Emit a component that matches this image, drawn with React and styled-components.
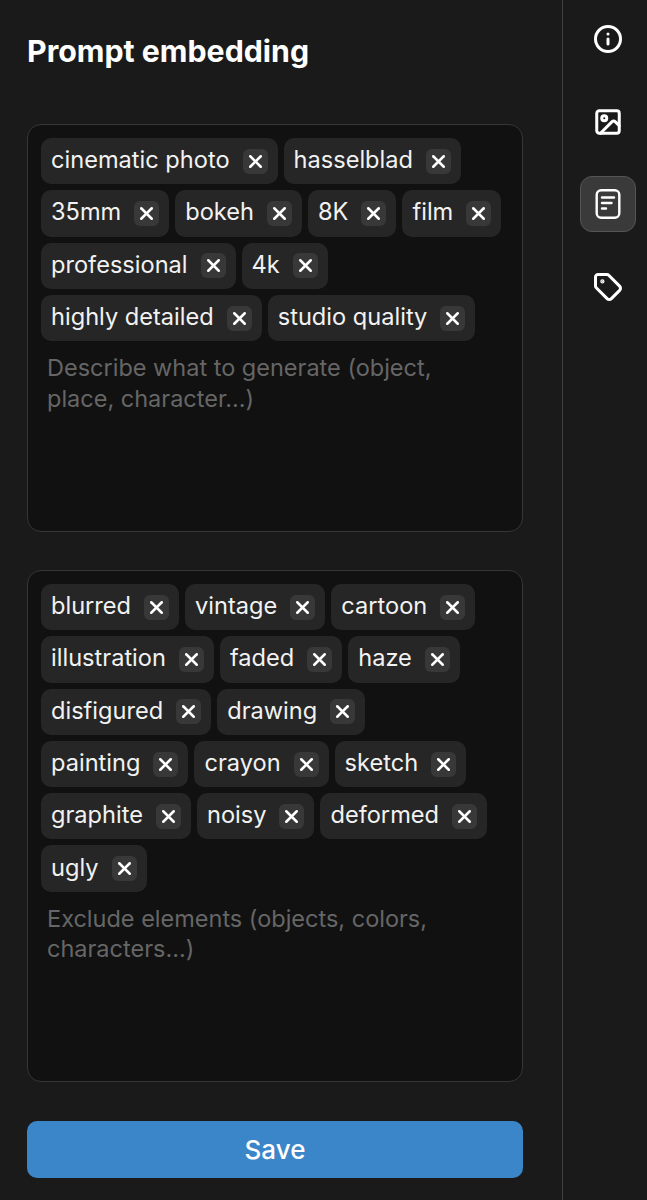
import styled, { createGlobalStyle } from "styled-components";
import { Info, Image, Tag, X } from "lucide-react";

const GlobalStyle = createGlobalStyle`
  html, body {
    margin: 0;
    background: #1a1a1a;
  }
  * {
    box-sizing: border-box;
  }
`;

const FONT = `Inter, "Noto Sans", "Liberation Sans", sans-serif`;

const Page = styled.div`
  display: flex;
  width: 647px;
  height: 1200px;
  background: #1a1a1a;
  font-family: ${FONT};
  overflow: hidden;
`;

const Main = styled.main`
  width: 563px;
  border-right: 1px solid #414141;
  padding: 30px 39px 22px 27px;
  display: flex;
  flex-direction: column;
`;

const Title = styled.h1`
  margin: 0 0 52px;
  height: 42px;
  line-height: 42px;
  font-size: 30.3px;
  font-weight: 650;
  color: #fff;
`;

const PromptBox = styled.div`
  height: ${(p) => p.$height}px;
  flex-shrink: 0;
  padding: 13px;
  background: #111111;
  border: 1px solid #363636;
  border-radius: 14px;
  display: flex;
  flex-direction: column;
  gap: 6px;
  margin-bottom: ${(p) => p.$gap}px;
`;

const TagList = styled.div`
  display: flex;
  flex-wrap: wrap;
  gap: 6px;
`;

const Chip = styled.div`
  height: 46.3px;
  display: flex;
  align-items: center;
  gap: 13px;
  padding: 0 10px;
  background: #262626;
  border-radius: 10px;
  color: #f2f2f2;
  font-size: 23.6px;
  white-space: nowrap;
`;

const ChipLabel = styled.span`
  margin-bottom: 3px;
`;

const ChipClose = styled.span`
  width: 25px;
  height: 25px;
  display: flex;
  align-items: center;
  justify-content: center;
  background: #383838;
  border-radius: 6px;
  color: #fff;
`;

const PromptInput = styled.textarea`
  flex: 1;
  background: transparent;
  border: none;
  outline: none;
  resize: none;
  padding: 6px 6px;
  font-family: ${FONT};
  font-size: 23.5px;
  line-height: 30.5px;
  color: #fff;

  &::placeholder {
    color: #666666;
    opacity: 1;
  }
`;

const SaveButton = styled.button`
  height: 57px;
  flex-shrink: 0;
  background: #3b85c9;
  border: none;
  border-radius: 10px;
  color: #fff;
  font-family: ${FONT};
  font-size: 26px;
  font-weight: 500;
`;

const Sidebar = styled.nav`
  flex: 1;
  display: flex;
  flex-direction: column;
  align-items: center;
  gap: 26.7px;
  padding: 11px 0 0 6px;
`;

const SideButton = styled.div`
  width: 56px;
  height: 56px;
  display: flex;
  align-items: center;
  justify-content: center;
  color: #fff;
  border-radius: 12px;
  border: 1px solid ${(p) => (p.$active ? "#555555" : "transparent")};
  background: ${(p) => (p.$active ? "#3a3a3a" : "transparent")};
`;

function DocIcon() {
  return (
    <svg width="30" height="30" viewBox="0 0 30 30" fill="none" stroke="currentColor" strokeWidth="2.4" strokeLinecap="round">
      <rect x="3.7" y="1.2" width="22.6" height="27.6" rx="4.5" />
      <path d="M9 8.5h12M9 14h9.5M9 19.5h4" />
    </svg>
  );
}

const positive = [
  "cinematic photo", "hasselblad", "35mm", "bokeh", "8K", "film",
  "professional", "4k", "highly detailed", "studio quality",
];
const negative = [
  "blurred", "vintage", "cartoon", "illustration", "faded", "haze",
  "disfigured", "drawing", "painting", "crayon", "sketch", "graphite",
  "noisy", "deformed", "ugly",
];

function TagBox({ tags, placeholder, height, gap }) {
  return (
    <PromptBox $height={height} $gap={gap}>
      <TagList>
        {tags.map((t) => (
          <Chip key={t}>
            <ChipLabel>{t}</ChipLabel>
            <ChipClose>
              <X size={21} strokeWidth={2.9} />
            </ChipClose>
          </Chip>
        ))}
      </TagList>
      <PromptInput placeholder={placeholder} />
    </PromptBox>
  );
}

export default function App() {
  return (
    <Page>
      <GlobalStyle />
      <Main>
        <Title>Prompt embedding</Title>
        <TagBox
          tags={positive}
          placeholder="Describe what to generate (object, place, character...)"
          height={408}
          gap={38}
        />
        <TagBox
          tags={negative}
          placeholder="Exclude elements (objects, colors, characters...)"
          height={512}
          gap={39}
        />
        <SaveButton>Save</SaveButton>
      </Main>
      <Sidebar>
        <SideButton><Info size={30} strokeWidth={2.4} /></SideButton>
        <SideButton><Image size={30} strokeWidth={2.4} /></SideButton>
        <SideButton $active><DocIcon /></SideButton>
        <SideButton><Tag size={30} strokeWidth={2.4} /></SideButton>
      </Sidebar>
    </Page>
  );
}
